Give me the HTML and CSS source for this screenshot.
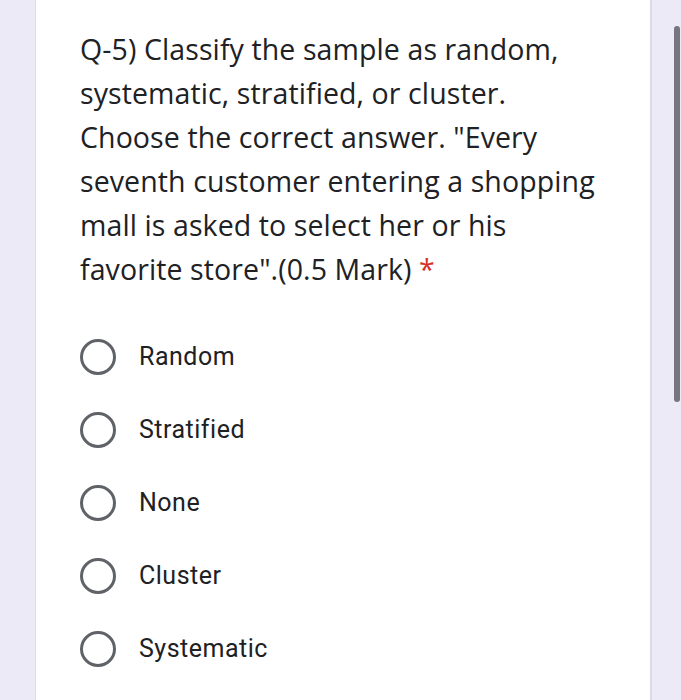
FILE: index.html
```html
<!DOCTYPE html>
<html>
<head>
<meta charset="utf-8">
<link rel="stylesheet" href="styles.css">
</head>
<body>
<div class="page">
  <div class="card">
    <div class="question">Q-5) Classify the sample as random,<br>systematic, stratified, or cluster.<br>Choose the correct answer. "Every<br>seventh customer entering a shopping<br>mall is asked to select her or his<br>favorite store".(0.5 Mark) <span class="req">*</span></div>
    <div class="options">
      <div class="option"><span class="radio"></span><span class="label">Random</span></div>
      <div class="option"><span class="radio"></span><span class="label">Stratified</span></div>
      <div class="option"><span class="radio"></span><span class="label">None</span></div>
      <div class="option"><span class="radio"></span><span class="label">Cluster</span></div>
      <div class="option"><span class="radio"></span><span class="label">Systematic</span></div>
    </div>
  </div>
  <div class="scrollbar"></div>
</div>
</body>
</html>
```
FILE: styles.css
```css
html, body {
  margin: 0;
  padding: 0;
  background: #edeaf7;
  height: 700px;
  overflow: hidden;
}
.page {
  position: relative;
  width: 681px;
  height: 700px;
}
.card {
  margin-left: 35px;
  width: 617px;
  height: 700px;
  background: #fff;
  border-left: 1px solid #dcdae2;
  border-right: 2px solid #dcdae2;
  padding: 27px 0 0 44px;
  box-sizing: border-box;
}
.question {
  font-family: "Open Sans", Roboto, sans-serif;
  font-size: 28.5px;
  letter-spacing: 0.1px;
  line-height: 44px;
  color: #202124;
  white-space: nowrap;
}
.req {
  color: #d93025;
}
.options {
  margin-top: 29px;
  display: flex;
  flex-direction: column;
}
.option {
  height: 73px;
  display: flex;
  align-items: center;
}
.radio {
  width: 30px;
  height: 30px;
  border: 3px solid #5f6368;
  border-radius: 50%;
  flex: none;
}
.label {
  margin-left: 23px;
  font-family: Roboto, "Liberation Sans", sans-serif;
  font-size: 25px;
  letter-spacing: 0.5px;
  color: #202124;
}
.scrollbar {
  position: absolute;
  left: 674px;
  top: 26px;
  width: 6px;
  height: 376px;
  background: #77757f;
  border-radius: 3px;
}
```
